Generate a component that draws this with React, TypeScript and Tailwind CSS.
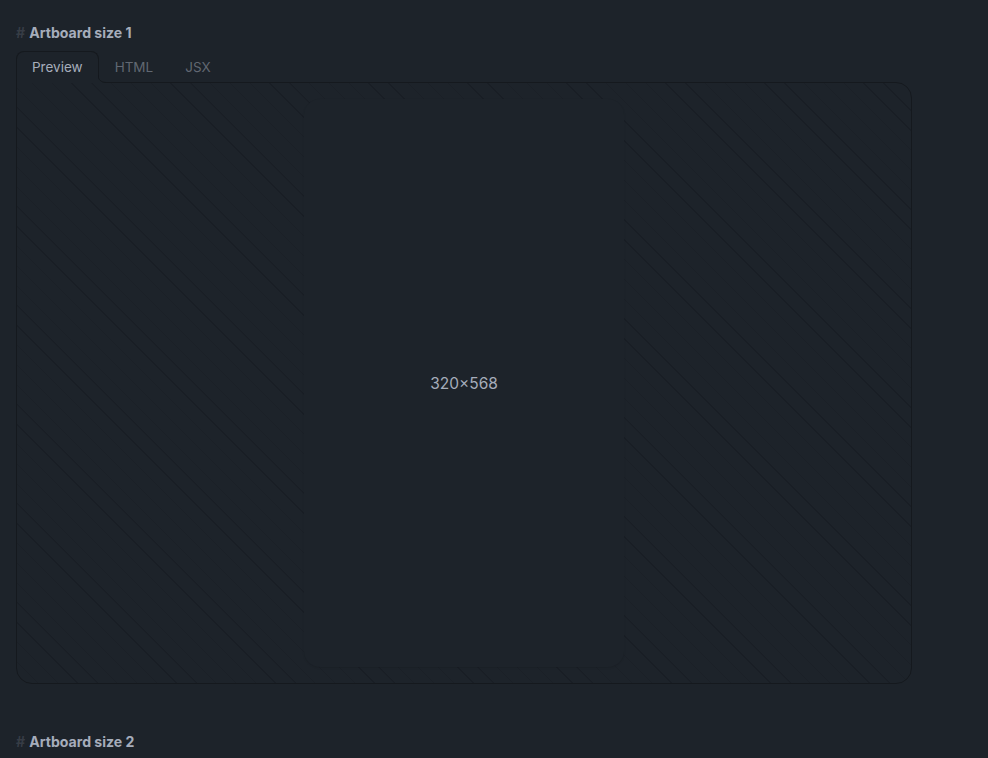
const stripes =
  'bg-[repeating-linear-gradient(45deg,transparent_0,transparent_42.4px,#191e25_42.4px,#191e25_43.4px,transparent_43.4px,transparent_56.6px,#191e25_56.6px,#191e25_57.6px,transparent_57.6px,transparent_70px),repeating-linear-gradient(45deg,transparent_0,transparent_0.4px,#1b2027_0.4px,#1b2027_1.4px,transparent_1.4px,transparent_14px)]';

function Heading({ title }: { title: string }) {
  return (
    <h2 className="text-[14.1px] leading-5 font-bold text-[#a6adbb]">
      <span className="mr-1 text-[#a6adbb]/20">#</span>
      {title}
    </h2>
  );
}

function Tabs() {
  return (
    <div className="relative z-10 flex h-8 text-[13.5px] leading-5">
      <div className="relative rounded-t-lg border border-b-0 border-[#15191e] bg-[#1d232a] px-[15px] pt-[5px] text-[#a6adbb]">
        Preview
        <svg className="absolute top-[23px] left-full h-2 w-2" viewBox="0 0 8 8" fill="none">
          <path d="M0 0C0 4.4 3.1 7.5 8 7.5V8H0Z" fill="#1d232a" />
          <path d="M0 0C0 4.4 3.1 7.5 8 7.5" stroke="#15191e" />
        </svg>
      </div>
      <div className="px-4 pt-1.5 text-[#a6adbb]/50">HTML</div>
      <div className="px-4 pt-1.5 text-[#a6adbb]/50">JSX</div>
    </div>
  );
}

export default function App() {
  return (
    <div className="h-[758px] overflow-hidden bg-[#1d232a] px-4 pt-[23px] font-['Inter',sans-serif]">
      <Heading title="Artboard size 1" />
      <div className="mt-2 w-[896px]">
        <Tabs />
        <div className={`-mt-px flex justify-center rounded-2xl rounded-tl-none border border-[#15191e] py-4 ${stripes}`}>
          <div className="flex h-[568px] w-[320px] items-center justify-center rounded-2xl bg-[#1d232a] pt-0.5 text-[15.5px] text-[#a6adbb] shadow-[0_1px_2px_rgba(0,0,0,0.1)]">
            320×568
          </div>
        </div>
      </div>
      <div className="mt-12">
        <Heading title="Artboard size 2" />
      </div>
    </div>
  );
}
